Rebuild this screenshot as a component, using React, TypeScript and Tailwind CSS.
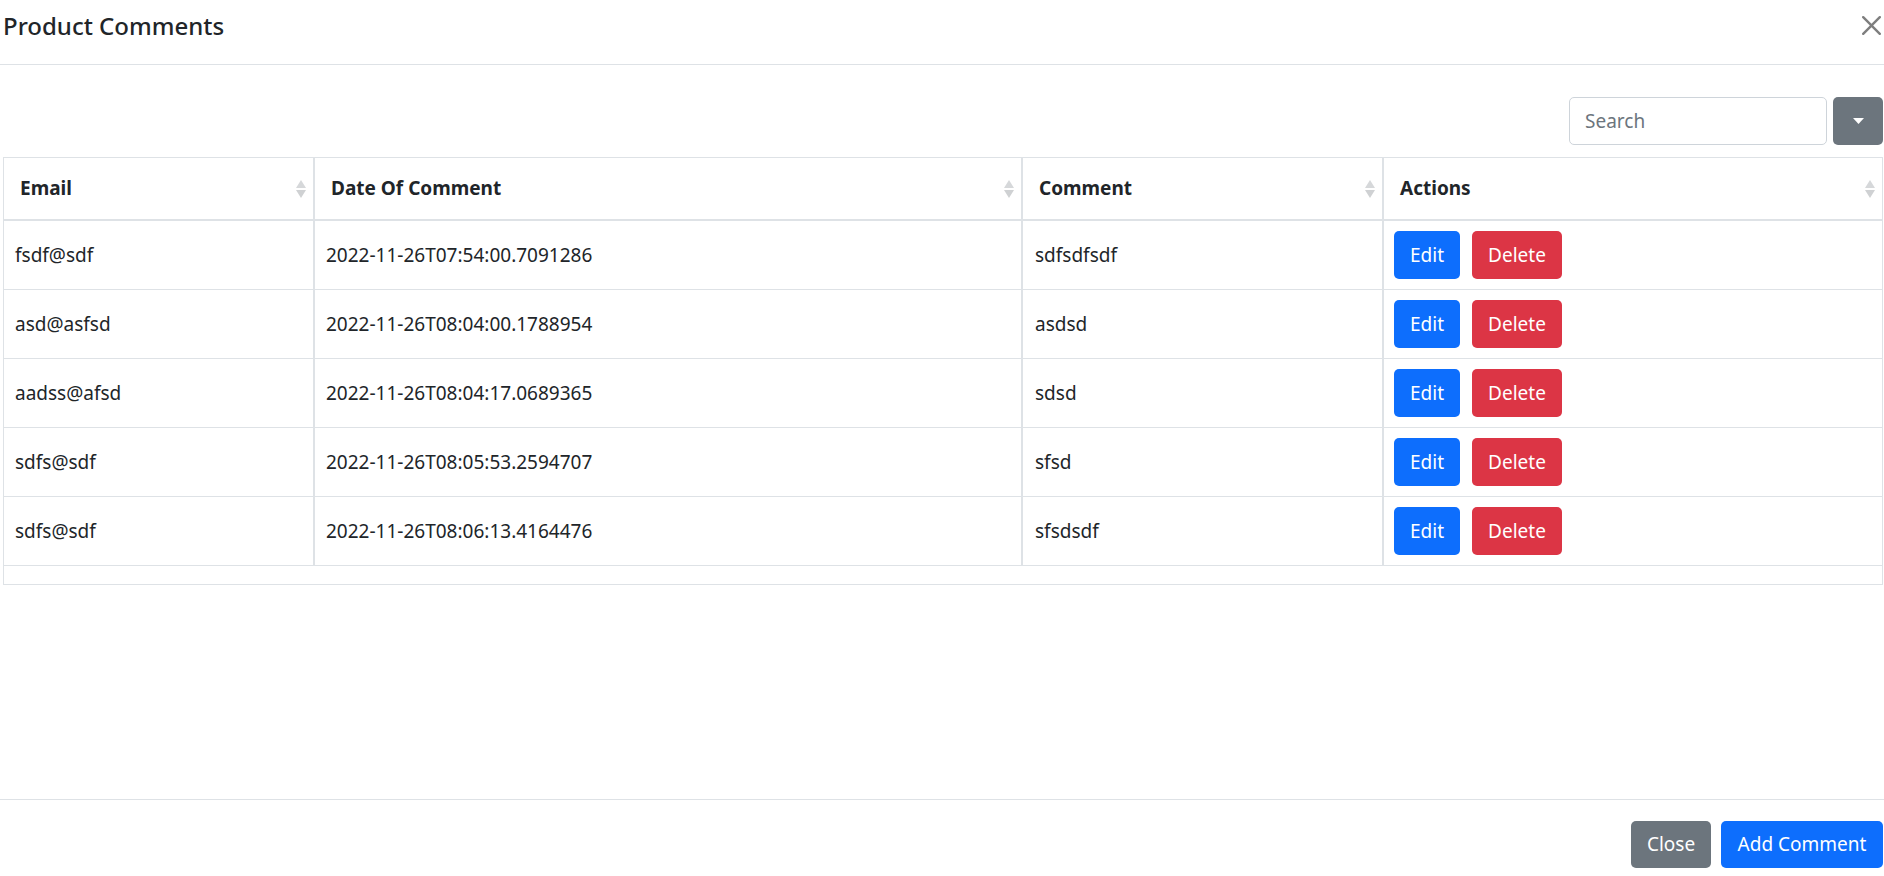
import React from 'react'

const rows = [
  { email: 'fsdf@sdf', date: '2022-11-26T07:54:00.7091286', comment: 'sdfsdfsdf' },
  { email: 'asd@asfsd', date: '2022-11-26T08:04:00.1788954', comment: 'asdsd' },
  { email: 'aadss@afsd', date: '2022-11-26T08:04:17.0689365', comment: 'sdsd' },
  { email: 'sdfs@sdf', date: '2022-11-26T08:05:53.2594707', comment: 'sfsd' },
  { email: 'sdfs@sdf', date: '2022-11-26T08:06:13.4164476', comment: 'sfsdsdf' },
]

function SortIcon() {
  return (
    <svg width="10" height="20" viewBox="0 0 10 20" className="shrink-0">
      <polygon points="5,1 10,9 0,9" fill="#d6d8da" />
      <polygon points="0,11 10,11 5,19" fill="#cfd1d3" />
    </svg>
  )
}

function HeadCell({ label, last }: { label: string; last?: boolean }) {
  return (
    <div className={`flex items-center justify-between pl-[16px] pr-[7px] ${last ? '' : 'border-r-2 border-[#dee2e6]'}`}>
      <span className="font-bold">{label}</span>
      <SortIcon />
    </div>
  )
}

export default function App() {
  return (
    <div className="w-full h-[876px] flex flex-col bg-white text-[#212529] font-['Noto_Sans',sans-serif] text-[19px] overflow-hidden">
      {/* Header */}
      <div className="h-[65px] shrink-0 border-b border-[#dee2e6] flex items-start justify-between pl-[3px] pr-[2px]">
        <h5 className="text-[24px] font-medium leading-[36px] pt-[8px]">Product Comments</h5>
        <button type="button" aria-label="Close" className="mt-[16px] mr-[1px] opacity-50">
          <svg width="19" height="19" viewBox="0 0 16 16">
            <path
              fill="#000"
              d="M.293.293a1 1 0 0 1 1.414 0L8 6.586 14.293.293a1 1 0 1 1 1.414 1.414L9.414 8l6.293 6.293a1 1 0 0 1-1.414 1.414L8 9.414l-6.293 6.293a1 1 0 0 1-1.414-1.414L6.586 8 .293 1.707a1 1 0 0 1 0-1.414z"
            />
          </svg>
        </button>
      </div>

      {/* Body */}
      <div className="pl-[3px] pr-[1px] pt-[32px]">
        <div className="flex justify-end gap-[6px] h-[48px]">
          <input
            type="text"
            placeholder="Search"
            className="w-[258px] h-[48px] border border-[#ced4da] rounded-[5px] px-[15px] text-[19px] placeholder:text-[#6c757d] outline-none"
          />
          <button type="button" className="w-[50px] h-[48px] bg-[#6c757d] rounded-[5px] flex items-center justify-center">
            <svg width="11" height="6" viewBox="0 0 11 6">
              <polygon points="0,0 11,0 5.5,6" fill="#fff" />
            </svg>
          </button>
        </div>

        {/* Table */}
        <div className="mt-[12px] border border-[#dee2e6]">
          <div className="grid grid-cols-[311px_708px_361px_1fr] h-[63px] border-b-2 border-[#dee2e6]">
            <HeadCell label="Email" />
            <HeadCell label="Date Of Comment" />
            <HeadCell label="Comment" />
            <HeadCell label="Actions" last />
          </div>
          {rows.map((r, i) => (
            <div key={i} className="grid grid-cols-[311px_708px_361px_1fr] h-[69px] border-b border-[#dee2e6]">
              <div className="flex items-center pl-[11px] border-r-2 border-[#dee2e6]">{r.email}</div>
              <div className="flex items-center pl-[11px] border-r-2 border-[#dee2e6]">{r.date}</div>
              <div className="flex items-center pl-[12px] border-r-2 border-[#dee2e6]">{r.comment}</div>
              <div className="flex items-center gap-[12px] pl-[10px]">
                <button type="button" className="w-[66px] h-[48px] rounded-[5px] bg-[#0d6efd] text-white">Edit</button>
                <button type="button" className="w-[90px] h-[48px] rounded-[5px] bg-[#dc3545] text-white">Delete</button>
              </div>
            </div>
          ))}
          <div className="h-[18px]" />
        </div>
      </div>

      {/* Footer */}
      <div className="mt-auto h-[77px] shrink-0 border-t border-[#dee2e6] flex justify-end items-start gap-[10px] pt-[21px] pr-[1px]">
        <button type="button" className="w-[80px] h-[47px] rounded-[5px] bg-[#6c757d] text-white">Close</button>
        <button type="button" className="w-[162px] h-[47px] rounded-[5px] bg-[#0d6efd] text-white">Add Comment</button>
      </div>
    </div>
  )
}
